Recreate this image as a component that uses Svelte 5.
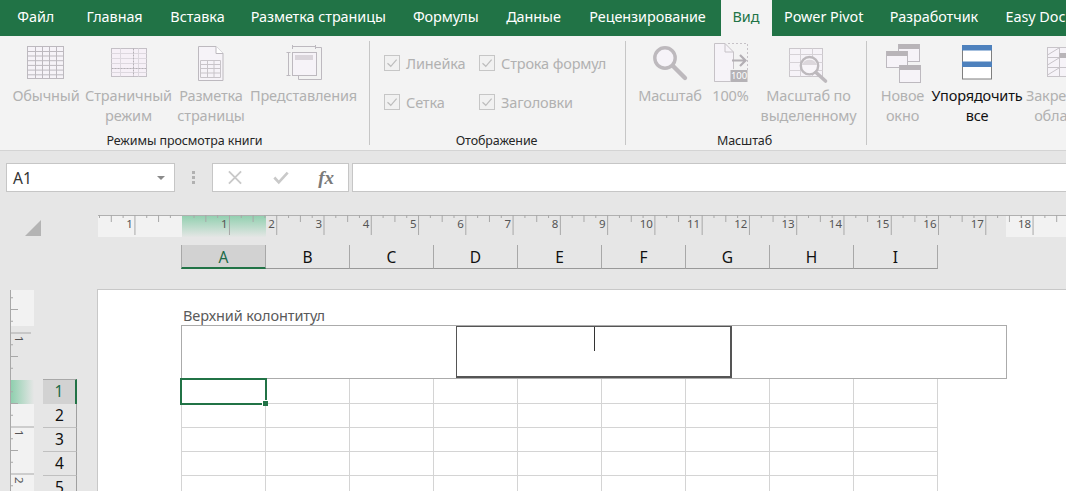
<script>
  const tabs = ['Файл','Главная','Вставка','Разметка страницы','Формулы','Данные','Рецензирование','Вид','Power Pivot','Разработчик','Easy Doc'];
  const cols = ['A','B','C','D','E','F','G','H','I'];
  const rows = [1,2,3,4,5];
  const step = 47.27;
  const origin = 182.2;
  const ticks = [];
  for (let k = -7; k <= 74; k++) {
    if (k === 0) continue;
    const x = origin + (k * step) / 4 - 98;
    const kind = k % 4 === 0 ? 'major' : k % 2 === 0 ? 'half' : 'small';
    ticks.push({ x, kind, n: k === -4 ? 1 : k / 4 });
  }
  const vticks = [];
  for (let k = -7; k <= 9; k++) {
    if (k === 0) continue;
    const y = 91 + (k * 47) / 4;
    const kind = k % 4 === 0 ? 'major' : k % 2 === 0 ? 'half' : 'small';
    vticks.push({ y, kind, n: Math.abs(k) / 4 });
  }
  const gridH = [9.5,14,18.7,23.4,28.1,32.8];
</script>

<div class="app">
  <nav class="tabs">
    {#each tabs as t, i}
      <div class="tab" class:active={i === 7} class:last={i === 10}>{t}</div>
    {/each}
  </nav>

  <section class="ribbon">
    <div class="group g1">
      <div class="btns">
        <div class="btn b76">
          <svg viewBox="0 0 48 44"><rect x="5.5" y="4.5" width="36" height="32" fill="#f6f3f8" stroke="#bdb9bf"/>
            {#each gridH as y}<path d="M5.5 {y}H41.5" stroke="#bdb9bf" fill="none"/>{/each}
            {#each [13,20,27,34] as x}<path d="M{x}.5 4.5V36.5" stroke="#bdb9bf" fill="none"/>{/each}</svg>
          <span>Обычный</span>
        </div>
        <div class="btn b89">
          <svg viewBox="0 0 48 44"><rect x="6.5" y="6.5" width="35" height="28" fill="#f6f0f7" stroke="#c4c0c6"/>
            {#each [11,16,21,26,30] as y}<path d="M6.5 {y}.5H41.5" stroke="#ddd8df" fill="none"/>{/each}
            {#each [15,33] as x}<path d="M{x}.5 6.5V34.5" stroke="#ddd8df" fill="none"/>{/each}
            <path d="M28.5 6.5V34.5M6.5 26.5H41.5" stroke="#b5b1b6" stroke-dasharray="2 1" fill="none"/></svg>
          <span>Страничный режим</span>
        </div>
        <div class="btn b76">
          <svg viewBox="0 0 48 44"><path d="M11.5 4.5H29L36 11.5V38.5H11.5Z" fill="#f6f3f8" stroke="#bdb9bf"/>
            <path d="M29 4.5V11.5H36" fill="#fff" stroke="#bdb9bf"/>
            <path d="M13.5 18.5H33.5V35.5H13.5ZM13.5 22.5H33.5M13.5 26.5H33.5M13.5 31H33.5M20.5 18.5V35.5M27 18.5V35.5" fill="none" stroke="#c8c4c9"/></svg>
          <span>Разметка страницы</span>
        </div>
        <div class="btn b109">
          <svg viewBox="0 0 48 44"><path d="M12.5 3V7M12.5 4.5H35.5M35.5 3V7M6.5 10.5H10.5M8.5 10.5V33.5M6.5 33.5H10.5" fill="none" stroke="#bdb9bf"/>
            <path d="M35.5 5.5H41.5V37.5H18.5V33.5" fill="none" stroke="#bdb9bf"/>
            <rect x="12.5" y="10.5" width="24" height="23" fill="#f6f3f8" stroke="#bdb9bf"/>
            <rect x="15" y="13" width="18" height="5" fill="#dad5db"/></svg>
          <span>Представления</span>
        </div>
      </div>
      <div class="title">Режимы просмотра книги</div>
    </div>

    <div class="group g2">
      <div class="checks">
        {#each ['Линейка','Строка формул','Сетка','Заголовки'] as c}
          <div class="check">
            <svg class="box" viewBox="0 0 16 16"><rect x=".5" y=".5" width="15" height="15" fill="#f1f1f1" stroke="#c6c6c6"/><path d="M3.5 8.2L6.8 11.3L12.6 4.6" fill="none" stroke="#bdbdbd" stroke-width="1.2"/></svg>
            <span>{c}</span>
          </div>
        {/each}
      </div>
      <div class="title">Отображение</div>
    </div>

    <div class="group g3">
      <div class="btns">
        <div class="btn b72">
          <svg viewBox="0 0 48 44"><circle cx="19" cy="16" r="10.2" fill="#f6f3f8" stroke="#bdb9bd" stroke-width="3.4"/><path d="M27 24L39 36" stroke="#bdb9bd" stroke-width="4.4" stroke-linecap="round"/></svg>
          <span>Масштаб</span>
        </div>
        <div class="btn b49">
          <svg viewBox="0 0 48 44"><path d="M7.5 1.5H18L26.5 10V27H23.5V39.5H7.5Z" fill="#f6f3f8"/>
            <path d="M23.5 39.5H7.5V1.5H18L26.5 10V27M18 1.5V10H26.5" fill="none" stroke="#c6c2c7"/>
            <path d="M21 1.5H40.5V28M7.5 39.5H23" fill="none" stroke="#c6c2c7" stroke-dasharray="2 2"/>
            <path d="M25 18.5H38M33 13L38.5 18.5L33 24" fill="none" stroke="#b3afb4" stroke-width="2.2"/>
            <rect x="23.5" y="28" width="17" height="12" fill="#b5b2b6"/>
            <text x="32" y="37.2" class="hundred" text-anchor="middle">100</text></svg>
          <span>100%</span>
        </div>
        <div class="btn b107">
          <svg viewBox="0 0 48 44"><rect x="4.5" y="6.5" width="33" height="28" fill="#f6f3f8" stroke="#cbc7cc"/>
            <path d="M4.5 12.5H37.5M4.5 20.5H37.5M4.5 28.5H37.5M15.5 6.5V34.5M27.5 6.5V34.5" fill="none" stroke="#d6d2d7"/>
            <circle cx="24.5" cy="23.7" r="8.7" fill="#f8f5f9" stroke="#bdb9bd" stroke-width="2.4"/>
            <path d="M17 23H32A8 8 0 0 0 17 23Z" fill="#dcd7dc"/>
            <path d="M31 30.5L40.5 39" stroke="#bdb9bd" stroke-width="3.6" stroke-linecap="round"/></svg>
          <span>Масштаб по выделенному</span>
        </div>
      </div>
      <div class="title">Масштаб</div>
    </div>

    <div class="group g4">
      <div class="btns">
        <div class="btn b57">
          <svg viewBox="0 0 48 44">
            {#each [[19.5,2,21,17],[7.5,9,21,16],[20.5,23,21,17]] as [x,y,w,h]}
              <rect x={x} y={y+.5} width={w} height={h} fill="#f6f3f8" stroke="#bdb9bf"/>
              <rect x={x} y={y} width={w} height="5" fill="#b8b4b8"/>
            {/each}</svg>
          <span>Новое окно</span>
        </div>
        <div class="btn b92 on">
          <svg viewBox="0 0 48 44"><rect x="9.5" y="3.5" width="29" height="33.5" fill="#fff" stroke="#7f7f7f"/>
            <rect x="9" y="3" width="30" height="5.5" fill="#4e81bd"/><rect x="9" y="19.5" width="30" height="5.5" fill="#4e81bd"/></svg>
          <span>Упорядочить все</span>
        </div>
        <div class="btn b78">
          <svg viewBox="0 0 48 44"><rect x="9.5" y="5.5" width="34" height="29" fill="#f6f3f8" stroke="#c8c4c9"/>
            <path d="M9.5 15.5H43.5M9.5 25.5H43.5M21.5 5.5V34.5M9.5 13L21 6M9.5 23L21 16M9.5 33L21 26" fill="none" stroke="#c8c4c9"/>
            <rect x="21.5" y="11" width="22" height="5" fill="#b8b4b8"/></svg>
          <span>Закрепить области</span>
        </div>
      </div>
    </div>
  </section>

  <section class="workspace">
    <div class="formula">
      <div class="namebox"><span>A1</span><i class="caret"></i></div>
      <div class="dots"><b></b><b></b><b></b></div>
      <div class="fxbox">
        <svg viewBox="0 0 16 16" class="fxi"><path d="M1.5 1.5L14.5 14.5M14.5 1.5L1.5 14.5" stroke="#c9c9c9" stroke-width="2" fill="none"/></svg>
        <svg viewBox="0 0 18 16" class="fxi"><path d="M1.5 8L6.5 13.5L16.5 2.5" stroke="#c9c9c9" stroke-width="3" fill="none"/></svg>
        <span class="fx">fx</span>
      </div>
      <div class="input"></div>
    </div>

    <div class="ruler-row">
      <div class="corner"><svg viewBox="0 0 16 16"><path d="M16 0V16H0Z" fill="#b4b4b4"/></svg></div>
      <svg class="hruler" width="968" height="23" viewBox="0 0 968 23">
        <defs>
          <linearGradient id="hg" x1="0" y1="0" x2="0" y2="1"><stop offset="0" stop-color="#8fcfae"/><stop offset="1" stop-color="#e4e6e5"/></linearGradient>
        </defs>
        <rect x="0" y="0" width="84" height="22" fill="#f2f2f2"/>
        <rect x="84" y="0" width="84" height="22" fill="url(#hg)"/>
        <rect x="908" y="0" width="60" height="22" fill="#f2f2f2"/>
        <path d="M0 .5H968" stroke="#b0b0b0"/>
        {#each ticks as t}
          <path d="M{t.x} 0V{t.kind === 'major' ? 20 : t.kind === 'half' ? 7 : 3}" stroke="#a8a8a8" fill="none"/>
          {#if t.kind === 'major'}
            <text x={t.x - 2} y="12.5" text-anchor="end" class="rnum">{t.n}</text>
          {/if}
        {/each}
      </svg>
    </div>

    <div class="colhead">
      {#each cols as c, i}
        <div class="col" class:cur={i === 0}>{c}</div>
      {/each}
    </div>

    <div class="sheet">
      <div class="gutter">
        <svg class="vruler" width="24" height="202" viewBox="0 0 24 202">
          <defs>
            <linearGradient id="vg" x1="0" y1="0" x2="1" y2="0"><stop offset="0" stop-color="#8fcfae"/><stop offset="1" stop-color="#e6e6e6"/></linearGradient>
          </defs>
          <rect x="1" y="1" width="23" height="36" fill="#f2f2f2"/>
          <rect x="1" y="91" width="23" height="24" fill="url(#vg)"/>
          <rect x="1" y="115" width="23" height="87" fill="#f2f2f2"/>
          <path d="M.5 1V202" stroke="#a8a8a8"/>
          {#each vticks as t}
            <path d="M0 {t.y}H{t.kind === 'major' ? (t.y === 44 ? 21 : 24) : t.kind === 'half' ? 8 : 3}" stroke="#a8a8a8" fill="none"/>
            {#if t.kind === 'major'}
              <text transform="translate(5 {t.y + 3}) rotate(90)" class="rnum">{t.n}</text>
            {/if}
          {/each}
        </svg>
        <div class="rowhead">
          {#each rows as r, i}
            <div class="rh" class:cur={i === 0}>{r}</div>
          {/each}
        </div>
      </div>
      <div class="page">
        <div class="hlabel">Верхний колонтитул</div>
        <div class="hbox">
          <div class="hs left"></div>
          <div class="hs center"><i class="cursor"></i></div>
          <div class="hs right"></div>
        </div>
        <div class="grid">
          {#each rows as r, ri}
            {#each cols as c, ci}
              <div class="cell" class:sel={ri === 0 && ci === 0}></div>
            {/each}
          {/each}
        </div>
      </div>
    </div>
  </section>
</div>

<style>
  :global(body) { margin: 0; overflow: hidden; background: #e6e6e6; }
  .app { width: 1066px; height: 491px; overflow: hidden; font-family: "Noto Sans", "Open Sans", sans-serif; font-size: 14px; }

  .tabs { display: grid; grid-template-columns: 71.5px 86px 80px 161.5px 93.5px 82px 146px 51px 104.5px 116px 74px; height: 36px; background: #217346; }
  .tab { color: #fff; font-size: 14.4px; line-height: 34px; text-align: center; white-space: nowrap; overflow: hidden; letter-spacing: -.05px; }
  .tab.active { background: #f3f3f3; color: #217346; }
  .tab.last { text-align: left; padding-left: 13.5px; }

  .ribbon { display: flex; box-sizing: border-box; height: 115px; padding: 5px 0 6px; background: #f3f3f3; border-bottom: 1px solid #d4d4d4; }
  .group { display: flex; flex-direction: column; flex: none; height: 104px; box-sizing: border-box; border-right: 1px solid #c6c6c6; }
  .g1 { width: 370px; padding-left: 8px; }
  .g2 { width: 256px; }
  .g3 { width: 241px; padding-left: 8px; }
  .g4 { width: 199px; padding-left: 7px; border-right: 0; }
  .btns { display: flex; flex: 1; padding-top: 1px; min-height: 0; }
  .btn { flex: none; display: flex; flex-direction: column; align-items: center; color: #b1b1b1; text-align: center; line-height: 20px; font-size: 14.5px; letter-spacing: -.15px; }
  .btn svg { width: 48px; height: 44px; flex: none; margin-bottom: -1px; }
  .btn.on { color: #111; }
  .b49 { width: 49px; } .b57 { width: 57px; } .b72 { width: 72px; } .b76 { width: 76px; } .b78 { width: 78px; }
  .b89 { width: 89px; } .b92 { width: 92px; } .b107 { width: 107px; } .b109 { width: 109px; }
  .title { text-align: center; line-height: 16px; font-size: 12.5px; color: #262626; margin-bottom: -4px; margin-left: -8px; letter-spacing: -.1px; }
  .g2 .title { margin-left: -2px; }
  .g3 .title { margin-left: -11px; }

  .checks { flex: 1; display: grid; grid-template-columns: 95px 1fr; grid-auto-rows: 16px; row-gap: 23px; padding: 14px 0 0 14px; align-content: start; }
  .check { display: flex; align-items: center; gap: 6px; color: #b1b1b1; font-size: 14.5px; line-height: 16px; white-space: nowrap; letter-spacing: -.15px; }
  .box { width: 16px; height: 16px; flex: none; }
  .hundred { font: 9.5px "Noto Sans", sans-serif; fill: #fff; }

  .workspace { display: flex; flex-direction: column; }
  .formula { display: flex; align-items: stretch; height: 29px; margin-top: 12px; padding-left: 6px; }
  .namebox { box-sizing: border-box; width: 169px; background: #fff; border: 1px solid #c6c6c6; display: flex; align-items: center; justify-content: space-between; padding: 0 9px 0 6px; font-size: 15.5px; color: #333; }
  .caret { width: 0; height: 0; border: 4px solid transparent; border-top: 4px solid #8a8a8a; margin-top: 4px; }
  .dots { width: 37px; display: flex; flex-direction: column; align-items: center; justify-content: center; gap: 2px; }
  .dots b { width: 3px; height: 3px; background: #b1b1b1; }
  .fxbox { box-sizing: border-box; width: 137px; background: #fff; border: 1px solid #c6c6c6; display: flex; align-items: center; justify-content: space-between; padding: 0 14px 0 14px; }
  .fxi { width: 16px; height: 15px; flex: none; }
  .fx { font: italic bold 19px "Liberation Serif", serif; color: #7a7a7a; }
  .input { flex: 1; margin-left: 3px; background: #fff; border: 1px solid #c6c6c6; border-right: 0; }

  .ruler-row { display: flex; margin-top: 23px; height: 23px; }
  .corner { width: 98px; flex: none; padding: 5px 0 0 25px; box-sizing: border-box; }
  .corner svg { display: block; width: 16px; height: 16px; }
  .hruler { flex: none; display: block; }
  .rnum { font: 11.5px "Noto Sans", sans-serif; fill: #555; }

  .colhead { display: flex; height: 24px; margin-top: 7px; padding-left: 182px; }
  .col { box-sizing: border-box; width: 84px; flex: none; text-align: center; font-size: 15.5px; line-height: 24px; color: #111; border-right: 1px solid #a8a8a8; border-bottom: 1px solid #999; }
  .col.cur { width: 85px; margin-left: -1px; background: #d2d2d2; color: #1d6b48; border-bottom: 2px solid #217346; border-left: 1px solid #a8a8a8; }

  .sheet { display: flex; margin-top: 20px; height: 202px; overflow: hidden; }
  .gutter { width: 97px; flex: none; display: flex; padding-left: 10px; box-sizing: border-box; }
  .vruler { flex: none; display: block; }
  .rowhead { margin: 90px 0 0 9px; width: 34px; flex: none; }
  .rh { box-sizing: border-box; height: 24px; text-align: center; font-size: 15.5px; line-height: 23px; color: #111; border-right: 1px solid #a0a0a0; border-bottom: 1px solid #c0c0c0; }
  .rh.cur { height: 25px; background: #d2d2d2; color: #1d6b48; border-right: 2px solid #217346; border-bottom: 0; border-top: 1px solid #a8a8a8; }

  .page { flex: 1; background: #fff; border-left: 1px solid #c8c8c8; border-top: 1px solid #c8c8c8; box-sizing: border-box; padding: 16px 0 0 84px; }
  .hlabel { font-size: 14.5px; line-height: 19px; color: #5a5a5a; padding: 1px 0 0 1px; margin-top: -1px; letter-spacing: -.1px; }
  .hbox { display: flex; box-sizing: border-box; width: 826px; height: 54px; margin-left: -1px; border: 1px solid #ababab; }
  .hs { height: 100%; box-sizing: border-box; }
  .left { width: 274px; }
  .center { width: 276px; position: relative; border: 1px solid #555; border-right-width: 2px; border-bottom: 2px solid #555; }
  .cursor { position: absolute; left: 137px; top: 0; width: 1px; height: 24px; background: #333; }

  .grid { display: grid; grid-template-columns: repeat(9, 84px); grid-template-rows: 25px; grid-auto-rows: 24px; width: 756px; }
  .cell { box-sizing: border-box; border-right: 1px solid #d4d4d4; border-bottom: 1px solid #d4d4d4; position: relative; }
  .cell:nth-child(9n+1) { border-left: 1px solid #d4d4d4; margin-left: -1px; }
  .cell.sel { z-index: 1; }
  .cell.sel::before { content: ""; position: absolute; left: -2px; top: -1px; right: -2px; bottom: -2px; border: 2px solid #217346; }
  .cell.sel::after { content: ""; position: absolute; right: -3px; bottom: -3px; width: 5px; height: 5px; background: #217346; box-shadow: -1px -1px 0 #fff; }
</style>
